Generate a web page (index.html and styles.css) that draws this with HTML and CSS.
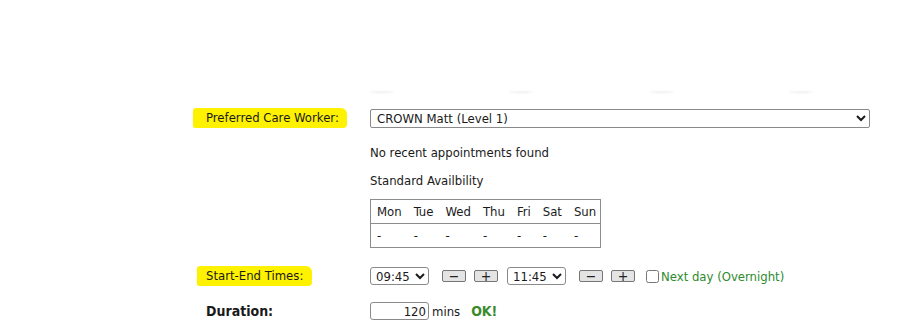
FILE: index.html
```
<!DOCTYPE html>
<html lang="en">
<head>
    <meta charset="UTF-8">
    <title>Visit Details</title>
    <link rel="stylesheet" href="styles.css">
</head>
<body>
    <div class="shadows">
        <span></span><span></span><span></span><span></span>
    </div>

    <div class="form">
        <div class="row row-worker">
            <div class="label"><span class="hl">Preferred Care Worker:</span></div>
            <div class="field">
                <select class="worker-select">
                    <option>CROWN Matt (Level 1)</option>
                </select>
            </div>
        </div>

        <div class="row row-text">
            <div></div>
            <div class="field">No recent appointments found</div>
        </div>

        <div class="row row-text second">
            <div></div>
            <div class="field">Standard Availbility</div>
        </div>

        <div class="row row-table">
            <div></div>
            <div class="field">
                <table class="avail">
                    <tr><th>Mon</th><th>Tue</th><th>Wed</th><th>Thu</th><th>Fri</th><th>Sat</th><th>Sun</th></tr>
                    <tr class="dash"><td>-</td><td>-</td><td>-</td><td>-</td><td>-</td><td>-</td><td>-</td></tr>
                </table>
            </div>
        </div>

        <div class="row row-times">
            <div class="label"><span class="hl hl-small">Start-End Times:</span></div>
            <div class="field times">
                <select class="time-select"><option>09:45</option></select>
                <button class="step">&minus;</button>
                <button class="step">+</button>
                <select class="time-select"><option>11:45</option></select>
                <button class="step">&minus;</button>
                <button class="step">+</button>
                <label class="overnight"><input type="checkbox">Next day (Overnight)</label>
            </div>
        </div>

        <div class="row row-duration">
            <div class="label bold">Duration:</div>
            <div class="field duration">
                <input type="text" class="mins" value="120">
                <span class="unit">mins</span>
                <span class="ok">OK!</span>
            </div>
        </div>
    </div>
</body>
</html>
```

FILE: styles.css
```
body {
    margin: 0;
    font-family: "DejaVu Sans Condensed", "DejaVu Sans", sans-serif;
    font-size: 13px;
    color: #1a1a1a;
    background: #fff;
}
.shadows {
    height: 92px;
    position: relative;
}
.shadows span {
    position: absolute;
    top: 88px;
    width: 24px;
    height: 3px;
    border-radius: 50%;
    box-shadow: 0 2px 3px rgba(0, 0, 0, 0.07);
}
.shadows span:nth-child(1) { left: 370px; }
.shadows span:nth-child(2) { left: 509px; }
.shadows span:nth-child(3) { left: 650px; }
.shadows span:nth-child(4) { left: 789px; }

.form {
    margin-left: 193px;
    padding-top: 15px;
}
.row {
    display: grid;
    grid-template-columns: 177px 1fr;
    align-items: center;
}
.label {
    display: flex;
}
.hl {
    background: #fff200;
    padding: 2px 8px 3px 13px;
    border-radius: 3px 6px 4px 2px;
}
.hl-small {
    margin-left: 4px;
    padding: 2px 9px 3px 9px;
}
.bold {
    font-weight: bold;
    font-size: 14px;
    padding-left: 13px;
}
.row-worker {
    height: 22px;
}
.worker-select {
    width: 500px;
    height: 19px;
    font-family: inherit;
    font-size: 13px;
    border: 1px solid #8a8a8a;
    border-radius: 2px;
    padding: 0 2px;
    background: #fff;
    color: #1a1a1a;
}
.row-text {
    height: 18px;
    margin-top: 14px;
}
.row-text.second {
    margin-top: 10px;
}
.row-table {
    margin-top: 10px;
}
.avail {
    border-collapse: collapse;
    border: 1px solid #8c8c8c;
}
.avail th,
.avail td {
    font-weight: normal;
    padding: 0 6px;
    height: 23px;
    text-align: left;
}
.avail th:last-child,
.avail td:last-child {
    padding-right: 4px;
}
.avail tr:first-child th {
    border-bottom: 1px solid #8c8c8c;
}
.row-times {
    height: 22px;
    margin-top: 17px;
}
.times {
    display: flex;
    align-items: center;
}
.time-select {
    width: 59px;
    height: 18px;
    font-family: inherit;
    font-size: 13px;
    border: 1px solid #8a8a8a;
    border-radius: 3px;
    padding: 0 1px;
    background: #fff;
    color: #1a1a1a;
    margin-right: 13px;
}
.step {
    width: 24px;
    height: 12px;
    padding: 0;
    border: 1px solid #767676;
    border-radius: 2px;
    background: #e4e4e4;
    font-family: inherit;
    font-size: 14px;
    line-height: 8px;
    color: #222;
    margin-right: 8px;
}
.step + .time-select {
    margin-left: 1px;
}
.overnight {
    display: flex;
    align-items: center;
    color: #2e8a2e;
    margin-left: 3px;
}
.overnight input {
    margin: 0 2px 0 0;
    width: 13px;
    height: 13px;
}
.row-duration {
    height: 20px;
    margin-top: 14px;
}
.duration {
    display: flex;
    align-items: center;
}
.mins {
    width: 59px;
    height: 18px;
    box-sizing: border-box;
    border: 1px solid #8a8a8a;
    border-radius: 3px;
    text-align: right;
    font-family: inherit;
    font-size: 13px;
    padding: 0 2px;
    color: #1a1a1a;
}
.unit {
    margin-left: 3px;
}
.ok {
    margin-left: 11px;
    color: #3a8a2a;
    font-weight: bold;
    font-size: 14px;
}
```
